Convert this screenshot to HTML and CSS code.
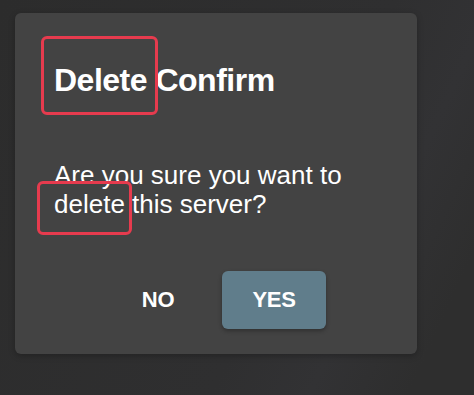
FILE: index.html
```html
<!DOCTYPE html>
<html lang="en">
<head>
<meta charset="utf-8">
<title>Delete Confirm</title>
<link rel="stylesheet" href="styles.css">
</head>
<body>
<div class="page">
  <div class="dialog">
    <h2 class="title"><span class="mark mark-title">Delete</span> Confirm</h2>
    <p class="message">Are you sure you want to <span class="mark mark-body">delete</span> this server?</p>
    <div class="actions">
      <button class="btn btn-text">NO</button>
      <button class="btn btn-primary">YES</button>
    </div>
  </div>
</div>
</body>
</html>
```
FILE: styles.css
```css
html, body {
  margin: 0;
  padding: 0;
}
body {
  width: 474px;
  height: 395px;
  overflow: hidden;
  background: #2e2e2f;
  font-family: "Liberation Sans", Arial, sans-serif;
  color: #ffffff;
}
.page {
  padding: 13px 0 0 15px;
  background: linear-gradient(115deg, #2c2c2c 0%, #2f2f30 60%, #323234 75%, #2e2e2e 90%);
  height: 395px;
  box-sizing: border-box;
}
.dialog {
  width: 402px;
  height: 341px;
  box-sizing: border-box;
  background: #434343;
  border-radius: 6px;
  box-shadow: 0 2px 6px rgba(0,0,0,0.25);
  padding: 48px 20px 25px 39px;
  display: flex;
  flex-direction: column;
}
.title {
  margin: 0;
  font-size: 32px;
  line-height: 38px;
  font-weight: 700;
  letter-spacing: -0.5px;
  color: #ffffff;
}
.message {
  margin: 62px 0 0 0;
  font-size: 26px;
  line-height: 29px;
  font-weight: 400;
  width: 320px;
  color: #ffffff;
}
.mark {
  position: relative;
}
.mark::before {
  content: "";
  position: absolute;
  border: 3px solid #e63b4e;
  border-radius: 6px;
}
.mark-title::before {
  left: -13px;
  right: -11px;
  top: -26px;
  bottom: -17px;
}
.mark-body::before {
  left: -17px;
  right: -7px;
  top: -8px;
  bottom: -16px;
}
.actions {
  margin-top: auto;
  display: flex;
  gap: 12px;
  margin-left: 52px;
}
.btn {
  width: 104px;
  height: 58px;
  border: none;
  border-radius: 6px;
  font-family: "Liberation Sans", Arial, sans-serif;
  font-size: 22px;
  font-weight: 700;
  color: #ffffff;
  padding: 0;
  letter-spacing: -0.3px;
}
.btn-text {
  background: transparent;
}
.btn-primary {
  background: #607d8b;
  box-shadow: 0 2px 4px rgba(0,0,0,0.3);
}
```
